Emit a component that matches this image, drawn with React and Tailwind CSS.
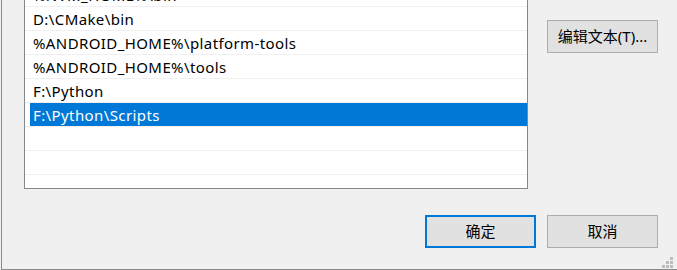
import React from "react";

const rows = [
  "%NVM_HOME%\\bin",
  "D:\\CMake\\bin",
  "%ANDROID_HOME%\\platform-tools",
  "%ANDROID_HOME%\\tools",
  "F:\\Python",
  "F:\\Python\\Scripts",
  "",
  "",
];

function Btn({ children, primary }) {
  return (
    <button
      className={
        "w-[111px] h-[33px] bg-[#e1e1e1] text-[15px] text-black flex items-center justify-center " +
        (primary ? "border-2 border-[#0078d7]" : "border border-[#adadad]")
      }
      style={{ fontFamily: "'Noto Sans', 'Noto Sans CJK SC', sans-serif" }}
    >
      {children}
    </button>
  );
}

export default function App() {
  return (
    <div className="w-[677px] h-[270px] bg-[#f0f0f0] pl-px overflow-hidden">
      <div className="relative h-full border-l border-b border-[#8a8a8a] flex flex-col">
        <div className="flex">
          <div
            className="ml-[22px] w-[504px] h-[189px] border-x border-b border-[#828790] bg-white overflow-hidden"
            style={{ fontFamily: "'Noto Sans', 'Noto Sans CJK SC', sans-serif" }}
          >
            <div className="mt-[-17px] flex flex-col">
              {rows.map((r, i) => {
                const sel = i === 5;
                return (
                  <div key={i} className="h-[24px] border-b border-[#f0f0f0]">
                    <div
                      className={
                        "ml-[5px] h-full pl-[3px] pt-[2px] text-[15px] leading-[21px] tracking-[0.4px] whitespace-nowrap " +
                        (sel ? "bg-[#0078d7] text-white" : "text-black")
                      }
                    >
                      {r}
                    </div>
                  </div>
                );
              })}
            </div>
          </div>
          <div className="ml-[19px] pt-[20px]">
            <Btn>编辑文本(T)...</Btn>
          </div>
        </div>
        <div className="flex justify-end gap-[11px] mt-[26px] pr-[19px]">
          <Btn primary>确定</Btn>
          <Btn>取消</Btn>
        </div>
        <svg
          className="absolute right-[4px] bottom-[1px]"
          width="11"
          height="11"
          viewBox="0 0 11 11"
        >
          <g fill="#bdbdbd">
            <rect x="8" y="0" width="3" height="3" />
            <rect x="4" y="4" width="3" height="3" />
            <rect x="8" y="4" width="3" height="3" />
            <rect x="0" y="8" width="3" height="3" />
            <rect x="4" y="8" width="3" height="3" />
            <rect x="8" y="8" width="3" height="3" />
          </g>
        </svg>
      </div>
    </div>
  );
}
